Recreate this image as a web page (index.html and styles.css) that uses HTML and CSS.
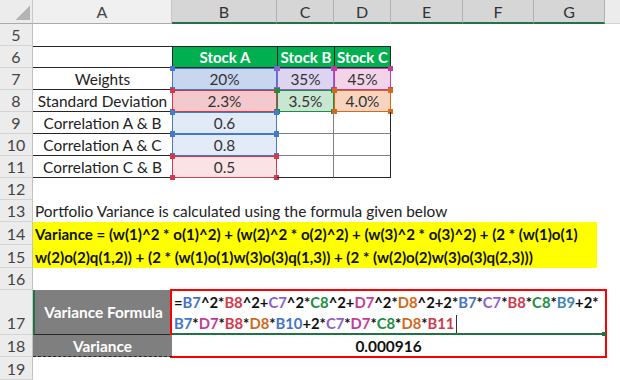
FILE: index.html
```html
<!DOCTYPE html>
<html lang="en">
<head>
  <meta charset="UTF-8">
  <title>Portfolio Variance</title>
  <link rel="stylesheet" href="styles.css">
</head>
<body>
  <div class="sheet">
    <div class="row hdr">
      <div class="corner"><span class="tri"></span></div>
      <div class="ch">A</div>
      <div class="ch sel">B</div>
      <div class="ch sel">C</div>
      <div class="ch sel">D</div>
      <div class="ch sel">E</div>
      <div class="ch sel">F</div>
      <div class="ch sel">G</div>
      <div class="ch rest"></div>
    </div>

    <div class="row"><div class="rh">5</div></div>

    <div class="row">
      <div class="rh">6</div>
      <div class="cell a t top"></div>
      <div class="cell b t top head">Stock A</div>
      <div class="cell c t top head">Stock B</div>
      <div class="cell d t top head">Stock C</div>
    </div>

    <div class="row">
      <div class="rh">7</div>
      <div class="cell a t">Weights</div>
      <div class="cell b ref r-b7">20%</div>
      <div class="cell c ref r-c7">35%</div>
      <div class="cell d ref r-d7">45%</div>
    </div>

    <div class="row">
      <div class="rh">8</div>
      <div class="cell a t">Standard Deviation</div>
      <div class="cell b ref r-b8">2.3%</div>
      <div class="cell c ref r-c8">3.5%</div>
      <div class="cell d ref r-d8">4.0%</div>
    </div>

    <div class="row">
      <div class="rh">9</div>
      <div class="cell a t">Correlation A &amp; B</div>
      <div class="cell b ref r-b9">0.6</div>
      <div class="cell c t grey"></div>
      <div class="cell d t grey"></div>
    </div>

    <div class="row">
      <div class="rh">10</div>
      <div class="cell a t">Correlation A &amp; C</div>
      <div class="cell b ref r-b10">0.8</div>
      <div class="cell c t grey"></div>
      <div class="cell d t grey"></div>
    </div>

    <div class="row">
      <div class="rh">11</div>
      <div class="cell a t">Correlation C &amp; B</div>
      <div class="cell b ref r-b11">0.5</div>
      <div class="cell c t grey last"></div>
      <div class="cell d t grey last"></div>
    </div>

    <div class="row"><div class="rh">12</div></div>

    <div class="row">
      <div class="rh">13</div>
      <div class="cell a-g left">Portfolio Variance is calculated using the formula given below</div>
    </div>

    <div class="row tall">
      <div class="rh">14</div>
      <div class="cell a-g left hl">Variance = (w(1)^2 * o(1)^2) + (w(2)^2 * o(2)^2) + (w(3)^2 * o(3)^2) + (2 * (w(1)o(1)</div>
    </div>

    <div class="row tall">
      <div class="rh">15</div>
      <div class="cell a-g left hl">w(2)o(2)q(1,2)) + (2 * (w(1)o(1)w(3)o(3)q(1,3)) + (2 * (w(2)o(2)w(3)o(3)q(2,3)))</div>
    </div>

    <div class="row"><div class="rh">16</div></div>

    <div class="block">
      <div class="rh r17">17</div>
      <div class="label l17">Variance Formula</div>
      <div class="result">
        <div class="formula">
          <div class="fl">=<i class="k1">B7</i>^2*<i class="k2">B8</i>^2+<i class="k3">C7</i>^2*<i class="k4">C8</i>^2+<i class="k5">D7</i>^2*<i class="k6">D8</i>^2+2*<i class="k1">B7</i>*<i class="k3">C7</i>*<i class="k2">B8</i>*<i class="k4">C8</i>*<i class="k7">B9</i>+2*</div>
          <div class="fl"><i class="k1">B7</i>*<i class="k5">D7</i>*<i class="k2">B8</i>*<i class="k6">D8</i>*<i class="k1">B10</i>+2*<i class="k3">C7</i>*<i class="k5">D7</i>*<i class="k4">C8</i>*<i class="k6">D8</i>*<i class="k2">B11</i><span class="caret"></span></div>
          <span class="fill"></span>
        </div>
        <div class="value">0.000916</div>
      </div>
      <div class="rh r18">18</div>
      <div class="label l18">Variance</div>
    </div>

    <div class="row last-row"><div class="rh">19</div></div>
  </div>
</body>
</html>
```

FILE: styles.css
```css
body { margin: 0; background: #fff; font-family: Lato, "Open Sans", sans-serif; font-size: 15.4px; color: #222; }
.sheet { width: 620px; height: 380px; overflow: hidden; }
.row { display: grid; grid-template-columns: 33px 139px 105px 57px 57px 72px 71px 71px 1fr; height: 22px; }
.row.tall { height: 23px; }
.row.last-row { height: 23px; }

.hdr { height: 24px; background: #e9e9e9; }
.corner { display: flex; align-items: flex-end; justify-content: flex-end; padding: 0 2px 3px 0; border-right: 1px solid #c8c8c8; border-bottom: 1px solid #ababab; background: #ececec; }
.tri { width: 14px; height: 14px; background: linear-gradient(to top left, #b4b4b4 50%, transparent 51%); }
.ch { display: flex; align-items: center; justify-content: center; color: #444; font-size: 16px; border-right: 1px solid #c6c6c6; border-bottom: 1px solid #ababab; background: #f0f0f0; }
.ch.sel { background: #d6d6d6; border-right-color: #b0b0b0; border-bottom: 2px solid #217346; color: #333; }
.ch.rest { background: #ececec; border-right: none; border-bottom-color: #d4d4d4; }

.rh { display: flex; align-items: center; justify-content: center; background: #ececec; color: #444; font-size: 16px; border-right: 1px solid #c2c2c2; border-bottom: 1px solid #d4d4d4; box-sizing: border-box; }

.cell { display: flex; align-items: center; justify-content: center; box-sizing: border-box; white-space: nowrap; position: relative; }
.a { grid-column: 2; }
.b { grid-column: 3; }
.c { grid-column: 4; }
.d { grid-column: 5; }
.a-g { grid-column: 2 / 9; }
.left { justify-content: flex-start; padding-left: 2px; }

.t { border-bottom: 1px solid #262626; }
.t.top { border-top: 1px solid #262626; }
.head { background: #00b050; color: #fff; font-weight: bold; border-left: 1px solid #262626; font-size: 15px; }
.d.head { border-right: 1px solid #262626; }
.grey { border-bottom-color: #7f7f7f; border-right: 1px solid #7f7f7f; }
.grey.last { border-bottom-color: #262626; }
.d.grey { border-right-color: #262626; }

.ref { --c: #4a7bd0; border: 1px solid var(--c); color: #333; }
.ref::before, .ref::after { content: ""; position: absolute; left: -3px; right: -3px; height: 5px;
  background: linear-gradient(var(--c), var(--c)) left / 5px 5px no-repeat, linear-gradient(var(--c), var(--c)) right / 5px 5px no-repeat; }
.ref::before { top: -3px; }
.ref::after { bottom: -3px; }
.r-b7 { --c: #4777cd; background: #c9d6f0; }
.r-c7 { --c: #9160cf; background: #ddd4f1; }
.r-d7 { --c: #c23c9c; background: #f2d4e8; }
.r-b8 { --c: #d03a4c; background: #f3c9cd; }
.r-c8 { --c: #1b8e3f; background: #c8e6d1; }
.r-d8 { --c: #d2691c; background: #f8d4bf; }
.r-b9 { --c: #3f7fc8; background: #e2eaf6; }
.r-b10 { --c: #4777cd; background: #e4ebf8; }
.r-b11 { --c: #d03a4c; background: #fbe3e5; }

.hl { background: #ffff00; font-weight: bold; margin-right: 8px; color: #111; font-size: 15.1px; }

.block { display: grid; grid-template-columns: 33px 139px 435px 1fr; grid-template-rows: 45px 22px; }
.r17 { grid-row: 1; grid-column: 1; align-items: flex-end; padding-bottom: 2px; }
.r18 { grid-row: 2; grid-column: 1; }
.label { display: flex; align-items: center; justify-content: center; background: #7f7f7f; color: #fff; font-weight: bold; grid-column: 2; box-sizing: border-box; }
.l17 { grid-row: 1; border-left: 2px solid #217346; border-bottom: 1px solid #262626; }
.l18 { grid-row: 2; border-bottom: 1px dashed #262626; }
.result { grid-column: 3; grid-row: 1 / 3; border: 2px solid #ff0000; margin: -1px 0 -1px -2px; display: flex; flex-direction: column; background: #fff; }
.formula { height: 44px; border-bottom: 2px solid #217346; box-sizing: border-box; padding: 1px 0 0 2px; position: relative; font-weight: bold; color: #111; font-size: 14.8px; }
.fl { height: 21px; line-height: 21px; white-space: nowrap; }
.fl i { font-style: normal; }
.k1 { color: #4373c9; }
.k2 { color: #d03a4c; }
.k3 { color: #8b5fcf; }
.k4 { color: #1b8e3f; }
.k5 { color: #c23c9c; }
.k6 { color: #d2691c; }
.k7 { color: #3d86b9; }
.caret { display: inline-block; width: 1px; height: 18px; background: #333; vertical-align: -4px; margin-left: 2px; }
.fill { position: absolute; right: -1px; bottom: -3px; width: 4px; height: 4px; background: #217346; }
.value { flex: 1; display: flex; align-items: center; justify-content: center; font-weight: bold; color: #111; }
```
